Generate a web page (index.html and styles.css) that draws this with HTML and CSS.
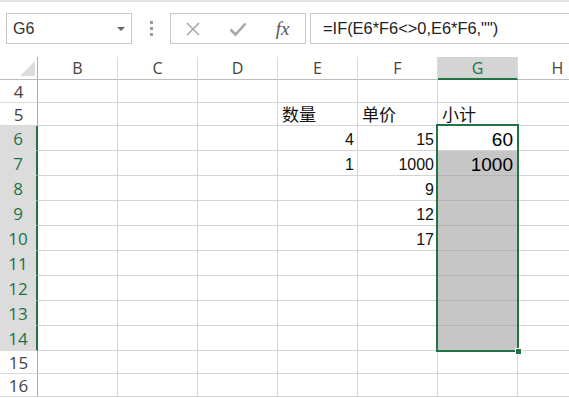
FILE: index.html
```html
<!DOCTYPE html>
<html lang="zh-CN">
<head>
    <meta charset="UTF-8">
    <title>Sheet</title>
    <link rel="stylesheet" href="styles.css">
</head>
<body>

<div class="toolbar">
    <div class="name-box"><span>G6</span><span class="caret"></span></div>
    <div class="grip"><i></i><i></i><i></i></div>
    <div class="fx-buttons">
        <span class="fx-btn">
            <svg width="16" height="16" viewBox="0 0 16 16"><path d="M2 2 L14 14 M14 2 L2 14" stroke="#a8a8a8" stroke-width="1.6" fill="none"/></svg>
        </span>
        <span class="fx-btn">
            <svg width="18" height="16" viewBox="0 0 18 16"><path d="M1.5 8.5 L6.5 13.5 L16.5 2.5" stroke="#a8a8a8" stroke-width="2.6" fill="none"/></svg>
        </span>
        <span class="fx-btn fx-label">fx</span>
    </div>
    <div class="formula">=IF(E6*F6&lt;&gt;0,E6*F6,"")</div>
</div>

<div class="sheet-wrap">
    <div class="sheet" id="sheet"></div>
    <!-- selection G6:G14, drawn on a grid of the same shape -->
    <div class="overlay">
        <div class="selection"><span class="fill-handle"></span></div>
    </div>
</div>

<script>
    const cols = ['B', 'C', 'D', 'E', 'F', 'G', 'H'];
    const data = {
        E5: '数量', F5: '单价', G5: '小计',
        E6: 4, F6: 15, G6: 60,
        E7: 1, F7: 1000, G7: 1000,
        F8: 9, F9: 12, F10: 17
    };
    const sheet = document.getElementById('sheet');

    function cell(cls, text) {
        const div = document.createElement('div');
        div.className = cls;
        if (text !== undefined) div.textContent = text;
        sheet.appendChild(div);
        return div;
    }

    // header row
    cell('corner');
    cols.forEach(c => cell('col-head' + (c === 'G' ? ' hl' : ''), c));

    // rows 4..16
    for (let r = 4; r <= 16; r++) {
        const inSel = r >= 6 && r <= 14;
        cell('row-head' + (inSel ? ' hl' : ''), r);
        cols.forEach(c => {
            let cls = 'cell';
            const v = data[c + r];
            if (typeof v === 'number') {
                cls += ' num';
                if (c === 'G') cls += ' big';
            } else if (v) {
                cls += ' label';
            }
            if (c === 'G' && r >= 7 && r <= 14) cls += ' sel';
            cell(cls, v);
        });
    }
</script>

</body>
</html>
```

FILE: styles.css
```css
body {
    margin: 0;
    width: 569px;
    height: 398px;
    overflow: hidden;
    background-color: #fff;
    font-family: "Liberation Sans", "Noto Sans CJK SC", sans-serif;
    color: #222;
}

/* formula bar */
.toolbar {
    display: flex;
    align-items: flex-start;
    height: 57px;
    box-sizing: border-box;
    border-top: 2px solid #e2e2e2;
    padding: 11px 0 0 6px;
}

.name-box {
    width: 126px;
    height: 31px;
    box-sizing: border-box;
    border: 1px solid #c8c8c8;
    display: flex;
    align-items: center;
    justify-content: space-between;
    padding: 0 6px 0 6px;
    font-size: 16px;
    color: #333;
}

.caret {
    border-left: 4px solid transparent;
    border-right: 4px solid transparent;
    border-top: 4px solid #666;
}

.grip {
    width: 38px;
    height: 31px;
    display: flex;
    flex-direction: column;
    align-items: center;
    justify-content: center;
    gap: 3px;
}

.grip i {
    width: 3px;
    height: 3px;
    background-color: #9c9c9c;
}

.fx-buttons {
    width: 136px;
    height: 31px;
    box-sizing: border-box;
    border: 1px solid #c8c8c8;
    display: flex;
    align-items: center;
}

.fx-btn {
    width: 45px;
    display: flex;
    justify-content: center;
    align-items: center;
}

.fx-label {
    font-family: "Liberation Serif", serif;
    font-style: italic;
    font-size: 19px;
    color: #555;
}

.formula {
    flex: 1;
    margin-left: 4px;
    height: 31px;
    box-sizing: border-box;
    border: 1px solid #c8c8c8;
    border-right: none;
    padding-left: 12px;
    font-size: 16.4px;
    line-height: 29px;
    color: #222;
    white-space: nowrap;
}

/* grid */
.sheet-wrap {
    display: grid;
}

.sheet, .overlay {
    grid-area: 1 / 1;
    display: grid;
    grid-template-columns: 38px repeat(7, 80px);
    grid-template-rows: repeat(3, 23px) repeat(9, 25px) repeat(2, 23px);
}

.overlay {
    pointer-events: none;
}

.corner {
    border-right: 1px solid #ababab;
    border-bottom: 1px solid #bdbdbd;
    display: flex;
    justify-content: flex-end;
    align-items: flex-end;
    padding: 0 2px 3px 0;
}

.corner::after {
    content: "";
    border-left: 15px solid transparent;
    border-bottom: 15px solid #dcdcdc;
}

.col-head {
    border-right: 1px solid #dadada;
    border-bottom: 1px solid #bdbdbd;
    display: flex;
    justify-content: center;
    align-items: center;
    font-family: "Open Sans", sans-serif;
    font-size: 16px;
    color: #444;
}

.col-head.hl {
    background-color: #d4d4d4;
    color: #217346;
    border-bottom: 2px solid #217346;
}

.row-head {
    border-right: 1px solid #ababab;
    border-bottom: 1px solid #dadada;
    display: flex;
    justify-content: center;
    align-items: center;
    font-family: "Open Sans", sans-serif;
    font-size: 17px;
    color: #444;
}

.row-head.hl {
    background-color: #dcdcdc;
    color: #217346;
    border-right: 2px solid #217346;
}

.cell {
    border-right: 1px solid #d4d4d4;
    border-bottom: 1px solid #d4d4d4;
    display: flex;
    align-items: flex-end;
    padding: 0 3px 1px 4px;
    font-size: 16px;
    line-height: 19px;
    color: #111;
    white-space: nowrap;
    overflow: hidden;
}

.cell.num {
    justify-content: flex-end;
}

.cell.label {
    font-size: 17px;
    padding-bottom: 0;
}

.cell.big {
    font-size: 19px;
    padding-right: 4px;
    color: #000;
}

.cell.sel {
    background-color: #c6c6c6;
    border-bottom-color: #b4b4b4;
}

.selection {
    grid-column: 7;
    grid-row: 4 / 13;
    margin: -2px -1px -1px -2px;
    border: 2px solid #217346;
    position: relative;
}

.fill-handle {
    position: absolute;
    right: -5px;
    bottom: -5px;
    width: 5px;
    height: 5px;
    background-color: #217346;
    border: 1px solid #fff;
}
```
